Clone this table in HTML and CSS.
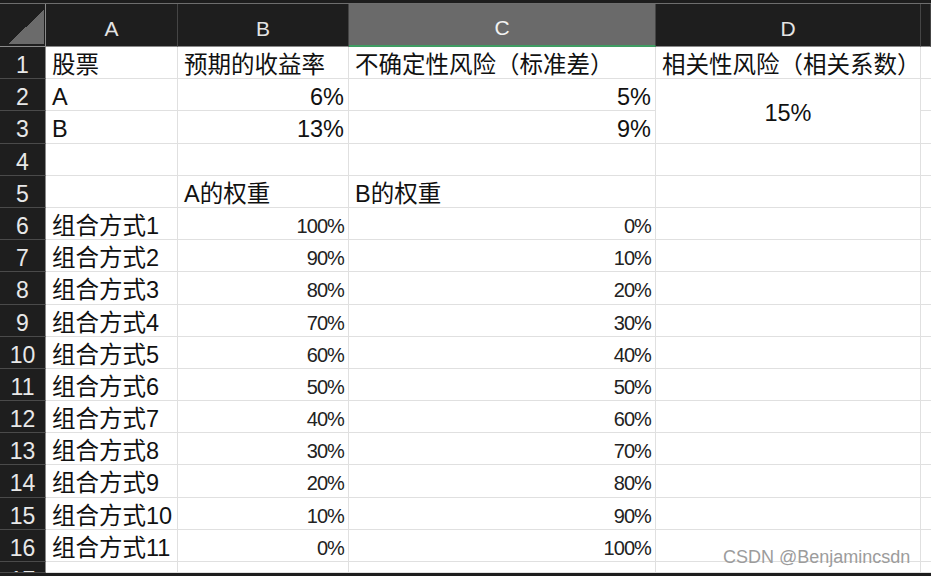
FILE: index.html
```html
<!DOCTYPE html>
<html lang="zh-CN">
<head>
  <meta charset="UTF-8" />
  <title>投资组合</title>
  <link rel="stylesheet" href="styles.css">
</head>
<body>

  <div class="sheet">
    <!-- column headers -->
    <div class="corner"></div>
    <div class="col-head">A</div>
    <div class="col-head">B</div>
    <div class="col-head active">C</div>
    <div class="col-head">D</div>
    <div class="col-head"></div>

    <!-- row 1 -->
    <div class="row-head">1</div>
    <div class="cell">股票</div>
    <div class="cell">预期的收益率</div>
    <div class="cell">不确定性风险（标准差）</div>
    <div class="cell">相关性风险（相关系数）</div>
    <div class="cell"></div>

    <!-- row 2 -->
    <div class="row-head">2</div>
    <div class="cell">A</div>
    <div class="cell num">6%</div>
    <div class="cell num">5%</div>
    <div class="cell merged">15%</div>
    <div class="cell"></div>

    <!-- row 3 -->
    <div class="row-head">3</div>
    <div class="cell">B</div>
    <div class="cell num">13%</div>
    <div class="cell num">9%</div>
    <div class="cell"></div>

    <!-- row 4 -->
    <div class="row-head">4</div>
    <div class="cell"></div>
    <div class="cell"></div>
    <div class="cell"></div>
    <div class="cell"></div>
    <div class="cell"></div>

    <!-- row 5 -->
    <div class="row-head">5</div>
    <div class="cell"></div>
    <div class="cell">A的权重</div>
    <div class="cell">B的权重</div>
    <div class="cell"></div>
    <div class="cell"></div>

    <div class="row-head">6</div>
    <div class="cell">组合方式1</div>
    <div class="cell pct">100%</div>
    <div class="cell pct">0%</div>
    <div class="cell"></div>
    <div class="cell"></div>

    <div class="row-head">7</div>
    <div class="cell">组合方式2</div>
    <div class="cell pct">90%</div>
    <div class="cell pct">10%</div>
    <div class="cell"></div>
    <div class="cell"></div>

    <div class="row-head">8</div>
    <div class="cell">组合方式3</div>
    <div class="cell pct">80%</div>
    <div class="cell pct">20%</div>
    <div class="cell"></div>
    <div class="cell"></div>

    <div class="row-head">9</div>
    <div class="cell">组合方式4</div>
    <div class="cell pct">70%</div>
    <div class="cell pct">30%</div>
    <div class="cell"></div>
    <div class="cell"></div>

    <div class="row-head">10</div>
    <div class="cell">组合方式5</div>
    <div class="cell pct">60%</div>
    <div class="cell pct">40%</div>
    <div class="cell"></div>
    <div class="cell"></div>

    <div class="row-head">11</div>
    <div class="cell">组合方式6</div>
    <div class="cell pct">50%</div>
    <div class="cell pct">50%</div>
    <div class="cell"></div>
    <div class="cell"></div>

    <div class="row-head">12</div>
    <div class="cell">组合方式7</div>
    <div class="cell pct">40%</div>
    <div class="cell pct">60%</div>
    <div class="cell"></div>
    <div class="cell"></div>

    <div class="row-head">13</div>
    <div class="cell">组合方式8</div>
    <div class="cell pct">30%</div>
    <div class="cell pct">70%</div>
    <div class="cell"></div>
    <div class="cell"></div>

    <div class="row-head">14</div>
    <div class="cell">组合方式9</div>
    <div class="cell pct">20%</div>
    <div class="cell pct">80%</div>
    <div class="cell"></div>
    <div class="cell"></div>

    <div class="row-head">15</div>
    <div class="cell">组合方式10</div>
    <div class="cell pct">10%</div>
    <div class="cell pct">90%</div>
    <div class="cell"></div>
    <div class="cell"></div>

    <div class="row-head">16</div>
    <div class="cell">组合方式11</div>
    <div class="cell pct">0%</div>
    <div class="cell pct">100%</div>
    <div class="cell"></div>
    <div class="cell"></div>

    <!-- row 17, cut off by the window -->
    <div class="row-head">17</div>
    <div class="cell"></div>
    <div class="cell"></div>
    <div class="cell"></div>
    <div class="cell"></div>
    <div class="cell"></div>
  </div>

  <div class="watermark">CSDN @Benjamincsdn</div>

</body>
</html>
```

FILE: styles.css
```css
body {
  margin: 0;
  height: 576px;
  padding-top: 3px;
  box-sizing: border-box;
  overflow: hidden;
  position: relative;
  background-color: #1d1d1d;
  font-family: "Liberation Sans", "Noto Sans CJK SC", sans-serif;
}

.sheet {
  display: grid;
  grid-template-columns: 46px 132px 171px 307px 265px 10px;
  grid-template-rows: 43px repeat(16, 32.2px) 10.8px;
  border-top: 1px solid #6e6e6e;
  background-color: #fff;
}

.sheet > div {
  box-sizing: border-box;
  white-space: nowrap;
  overflow: hidden;
}

.corner {
  background-color: #1e1e1e;
  background-image: linear-gradient(to top left, #6b6b6b 50%, transparent 50%);
  background-size: 36px 34px;
  background-position: 8px 6px;
  background-repeat: no-repeat;
  border-right: 1px solid #8a8a8a;
  border-bottom: 1px solid #8a8a8a;
}

.col-head {
  background-color: #1e1e1e;
  color: #e4e4e4;
  text-align: center;
  font-size: 21px;
  padding-top: 7px;
  line-height: 35px;
  border-right: 1px solid #454545;
  border-bottom: 1px solid #8a8a8a;
}

.col-head.active {
  background-color: #6a6a6a;
  color: #f2f2f2;
  border-bottom: 2px solid #3f9c62;
  line-height: 34px;
}

.row-head {
  background-color: #1e1e1e;
  color: #e8e8e8;
  text-align: center;
  font-size: 23px;
  padding-top: 4px;
  line-height: 28px;
  border-right: 1px solid #8a8a8a;
  border-bottom: 1px solid #4a4a4a;
}

.cell {
  padding: 4px 4px 0 6px;
  font-size: 23.5px;
  line-height: 28px;
  color: #111;
  border-right: 1px solid #e0e0e0;
  border-bottom: 1px solid #e0e0e0;
}

.num {
  text-align: right;
}

.pct {
  text-align: right;
  font-size: 20px;
  letter-spacing: -0.9px;
  color: #222;
}

.merged {
  grid-row: span 2;
  display: flex;
  align-items: center;
  justify-content: center;
  padding: 4px 0 0;
}

.watermark {
  position: absolute;
  left: 723px;
  top: 547px;
  font-size: 18px;
  color: #9c9c9c;
}
```
